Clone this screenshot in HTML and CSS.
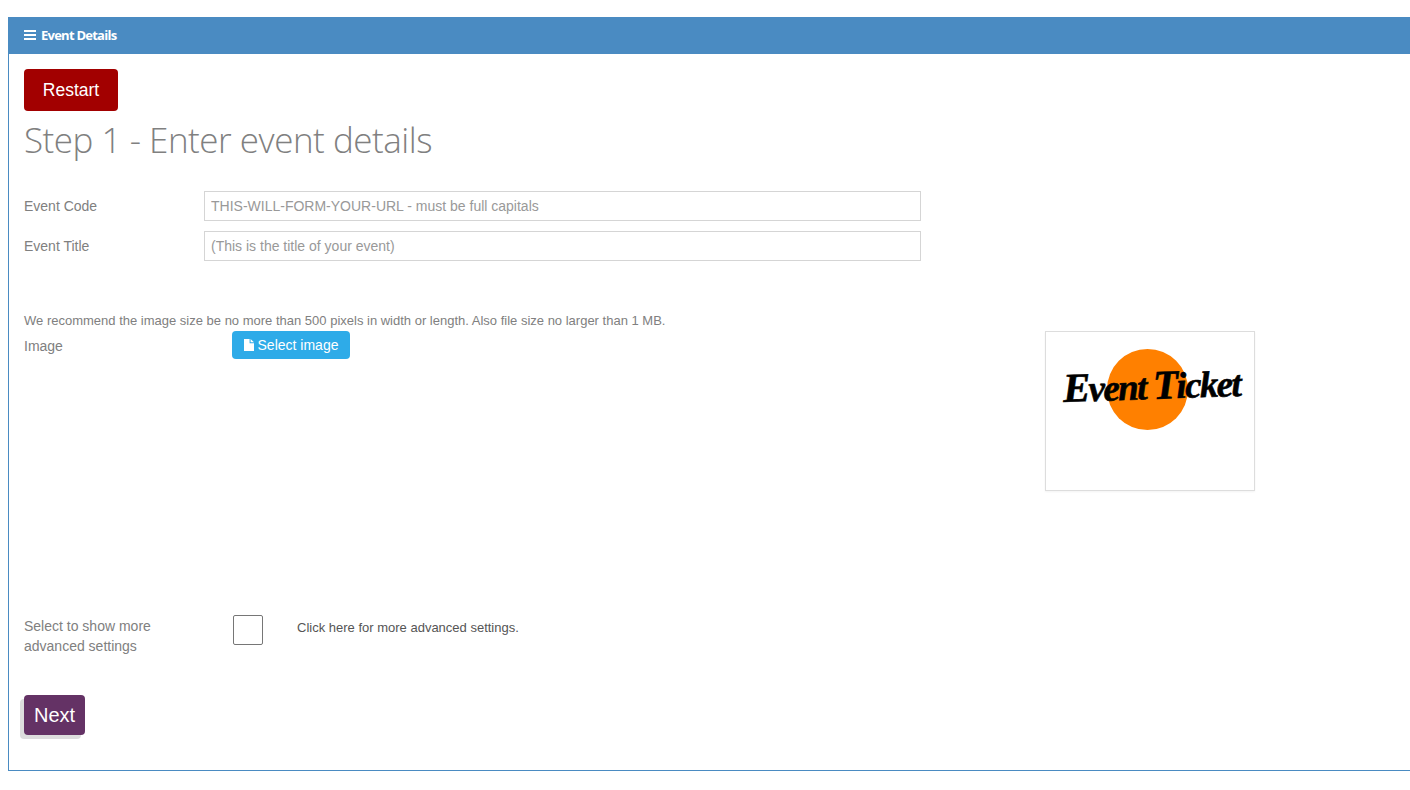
FILE: index.html
```html
<!DOCTYPE html>
<html>
<head>
    <title>Event Details</title>
    <link rel="stylesheet" href="styles.css">
</head>
<body>
    <div class="panel">
        <div class="panelHeading">
            <svg class="menuIcon" viewBox="0 0 12 10" width="12" height="10"><path d="M0 0h12v2H0zM0 4h12v2H0zM0 8h12v2H0z" fill="#fff"/></svg>
            <span>Event Details</span>
        </div>
        <div class="panelBody">
            <button class="restartButton">Restart</button>
            <h1 class="stepTitle">Step 1 - Enter event details</h1>
            <div class="formRow">
                <label class="fieldLabel">Event Code</label>
                <input class="textField" type="text" placeholder="THIS-WILL-FORM-YOUR-URL - must be full capitals">
            </div>
            <div class="formRow">
                <label class="fieldLabel">Event Title</label>
                <input class="textField" type="text" placeholder="(This is the title of your event)">
            </div>
            <p class="imageNote">We recommend the image size be no more than 500 pixels in width or length. Also file size no larger than 1 MB.</p>
            <div class="imageRow">
                <label class="fieldLabel">Image</label>
                <button class="selectButton">
                    <svg class="fileIcon" viewBox="0 0 10 12" width="10" height="12"><path d="M0 0h5.6v4.2H10V12H0zM6.6 0 10 3.3H6.6z" fill="#fff"/></svg>Select image
                </button>
                <div class="imagePreview">
                    <div class="logoCircle"></div>
                    <span class="logoText"><span class="logoInitial">E</span>vent <span class="logoInitial">T</span>icket</span>
                </div>
            </div>
            <div class="advancedRow">
                <label class="advancedLabel">Select to show more advanced settings</label>
                <input class="advancedCheck" type="checkbox">
                <span class="advancedHint">Click here for more advanced settings.</span>
            </div>
            <button class="nextButton">Next</button>
        </div>
    </div>
</body>
</html>
```

FILE: styles.css
```css
html, body {
    overflow: hidden;
}

body {
    margin: 0;
    height: 790px;
    background-color: #fff;
    font-family: 'Liberation Sans', Arial, sans-serif;
    font-size: 14px;
    color: #808080;
}

.panel {
    box-sizing: border-box;
    width: 1440px;
    height: 754px;
    margin: 17px 0 0 8px;
    border: 1px solid #4a8bc2;
    border-top: 0;
}

.panelHeading {
    display: flex;
    align-items: center;
    box-sizing: border-box;
    height: 37px;
    padding: 0 0 2px 15px;
    background-color: #4a8bc2;
    color: #fff;
    font-family: 'Open Sans', sans-serif;
    font-size: 13px;
    font-weight: 700;
    letter-spacing: -0.75px;
}

.menuIcon {
    margin-right: 5px;
}

.panelBody {
    padding: 15px 15px 0;
}

button {
    display: block;
    border: 0;
    color: #fff;
    font-family: 'Liberation Sans', Arial, sans-serif;
}

.restartButton {
    width: 94px;
    height: 42px;
    padding: 0;
    border-radius: 4px;
    background-color: #a20000;
    font-size: 17.5px;
}

.stepTitle {
    margin: 7px 0 29px;
    height: 44px;
    line-height: 44px;
    font-family: 'Open Sans', sans-serif;
    font-size: 35px;
    font-weight: 300;
    letter-spacing: -0.48px;
    color: #808080;
}

.formRow {
    display: flex;
    align-items: center;
    height: 30px;
    margin-bottom: 10px;
}

.fieldLabel {
    flex: none;
    width: 180px;
}

.textField {
    box-sizing: border-box;
    width: 717px;
    height: 30px;
    padding: 0 6px;
    border: 1px solid #d5d5d5;
    font-family: 'Liberation Sans', Arial, sans-serif;
    font-size: 14px;
    outline: none;
}

.textField::placeholder {
    color: #999;
    opacity: 1;
}

.imageNote {
    margin: 0;
    padding-top: 41px;
    height: 18px;
    line-height: 18px;
    font-size: 13px;
}

.imageRow {
    display: flex;
    align-items: flex-start;
    height: 284px;
    margin-top: 1px;
}

.imageRow .fieldLabel {
    width: 208px;
    line-height: 30px;
}

.selectButton {
    display: flex;
    align-items: center;
    justify-content: center;
    width: 118px;
    height: 28px;
    padding: 0;
    border-radius: 4px;
    background-color: #2eabe8;
    font-size: 14px;
}

.fileIcon {
    margin-right: 4px;
}

.imagePreview {
    position: relative;
    box-sizing: border-box;
    width: 210px;
    height: 160px;
    margin-left: 695px;
    border: 1px solid #ddd;
    box-shadow: 0 1px 2px rgba(0, 0, 0, 0.05);
}

.logoCircle {
    position: absolute;
    left: 61px;
    top: 17px;
    width: 81px;
    height: 81px;
    border-radius: 50%;
    background-color: #ff8000;
}

.logoText {
    position: absolute;
    left: 17px;
    top: 35px;
    font-family: 'Liberation Serif', serif;
    font-size: 37px;
    line-height: 40px;
    font-weight: 700;
    font-style: italic;
    letter-spacing: -1.7px;
    white-space: nowrap;
    color: #000;
    -webkit-text-stroke: 0.6px #000;
    transform: rotate(-2deg);
}

.logoInitial {
    font-size: 41px;
    line-height: 30px;
}

.advancedRow {
    display: flex;
    align-items: flex-start;
}

.advancedLabel {
    flex: none;
    width: 180px;
    margin-top: 1px;
    line-height: 20px;
}

.advancedCheck {
    appearance: none;
    flex: none;
    box-sizing: border-box;
    width: 30px;
    height: 30px;
    margin: 0 0 0 29px;
    border: 1px solid #767676;
    border-radius: 2px;
    background-color: #fff;
}

.advancedHint {
    margin-left: 34px;
    padding-top: 5px;
    line-height: 16px;
    font-size: 13px;
    color: #555;
}

.nextButton {
    width: 61px;
    height: 40px;
    margin-top: 39px;
    padding: 0;
    border-radius: 4px;
    background-color: #643265;
    font-size: 20px;
    box-shadow: -4px 4px 0 #ddd;
}
```
